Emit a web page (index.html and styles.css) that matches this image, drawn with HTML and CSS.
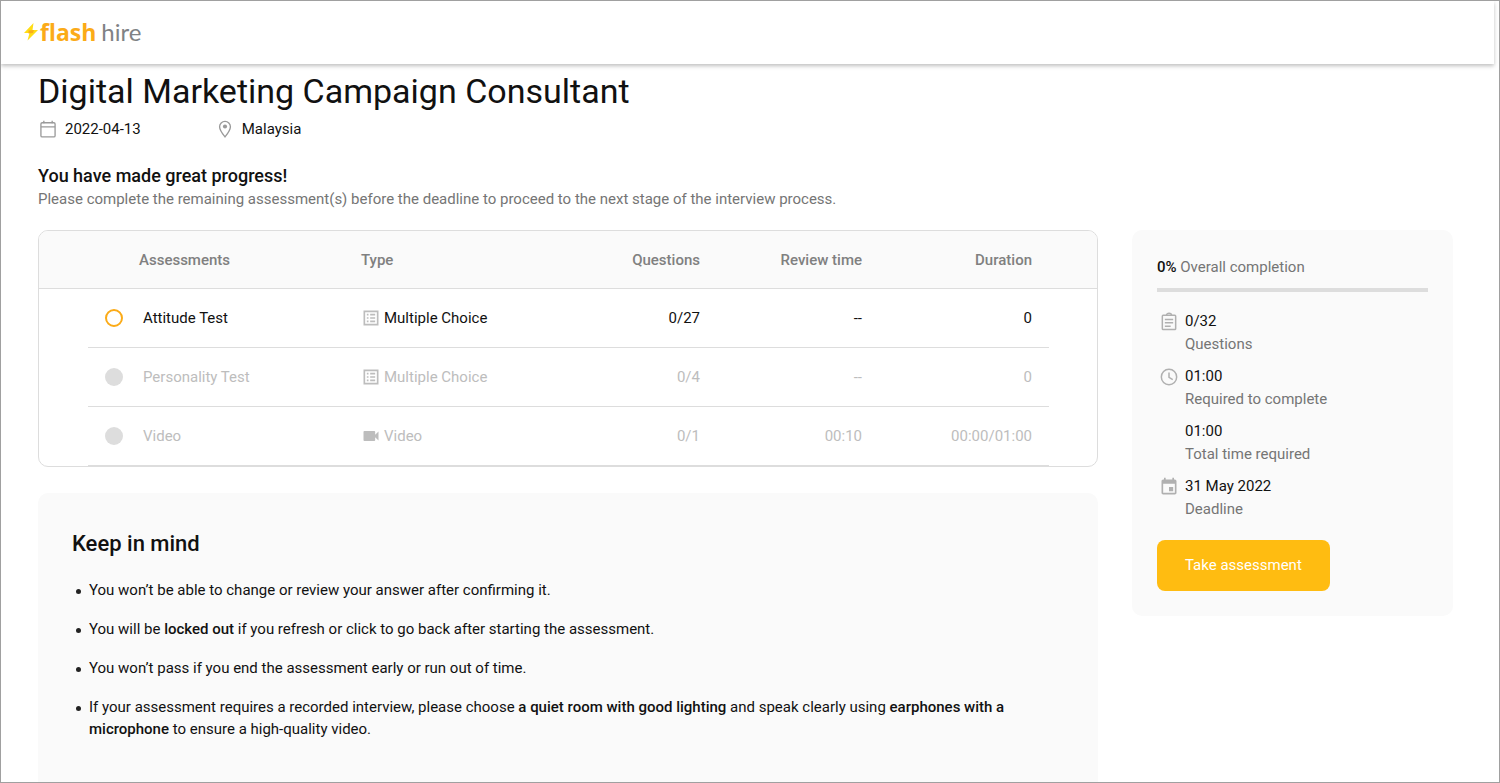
FILE: index.html
```html
<!DOCTYPE html>
<html lang="en">
  <head>
    <meta charset="UTF-8" />
    <meta name="viewport" content="width=device-width, initial-scale=1.0" />
    <title>Flash Hire - Assessments</title>
    <link rel="stylesheet" href="styles.css">
  </head>
  <body>
    <svg class="sprite" aria-hidden="true">
      <symbol id="icon-list" viewBox="0 0 24 24">
        <path d="M3 3h18v18H3zM5 5v14h14V5zM7 7h2v2H7zM7 11h2v2H7zM7 15h2v2H7zM11 7h6v2h-6zM11 11h6v2h-6zM11 15h6v2h-6z" fill-rule="evenodd" />
      </symbol>
      <symbol id="icon-video" viewBox="0 0 24 24">
        <path d="M17 10.5V7c0-.55-.45-1-1-1H4c-.55 0-1 .45-1 1v10c0 .55.45 1 1 1h12c.55 0 1-.45 1-1v-3.5l4 4v-11l-4 4z" />
      </symbol>
    </svg>

    <div class="page">
      <header class="header">
        <a href="#" class="logo">
          <svg class="logo-bolt" viewBox="0 0 14 20">
            <path d="M9.500 2 0 12h5.500L3.500 19.500 14 9H8.500z" fill="#ffdd15" />
            <path d="M4.500 9.500l5.500-.5-1 3-4.500.500z" fill="#fbae17" />
          </svg>
          <span class="logo-flash">flash</span>
          <span class="logo-hire">hire</span>
        </a>
      </header>

      <main class="main">
        <h1>Digital Marketing Campaign Consultant</h1>
        <div class="meta">
          <span class="meta-item">
            <svg class="icon" viewBox="0 0 24 24" fill="none" stroke="currentColor" stroke-width="1.6">
              <rect x="3.5" y="4.5" width="17" height="17" rx="1.5" />
              <path d="M3.5 9.5h17M7 2v3M17 2v3" />
            </svg>
            2022-04-13
          </span>
          <span class="meta-item">
            <svg class="icon" viewBox="0 0 24 24" fill="none" stroke="currentColor" stroke-width="1.6">
              <path d="M12 21.5C8.500 17.200 5.500 13 5.500 9.300a6.500 6.500 0 0 1 13 0c0 3.700-3 7.900-6.500 12.200z" />
              <circle cx="12" cy="9" r="2.500" fill="currentColor" stroke="none" />
            </svg>
            Malaysia
          </span>
        </div>

        <h2>You have made great progress!</h2>
        <p class="intro">Please complete the remaining assessment(s) before the deadline to proceed to the next stage of the interview process.</p>

        <div class="columns">
          <div class="left">
            <div class="table-card">
              <table>
                <thead>
                  <tr>
                    <th class="col-name">Assessments</th>
                    <th class="col-type">Type</th>
                    <th class="col-questions">Questions</th>
                    <th class="col-review">Review time</th>
                    <th class="col-duration">Duration</th>
                  </tr>
                </thead>
                <tbody>
                  <tr class="active">
                    <td><span class="name"><span class="dot"></span>Attitude Test</span></td>
                    <td><span class="type"><svg class="icon"><use href="#icon-list" /></svg>Multiple Choice</span></td>
                    <td class="num">0/27</td>
                    <td class="num">--</td>
                    <td class="num">0</td>
                  </tr>
                  <tr>
                    <td><span class="name"><span class="dot"></span>Personality Test</span></td>
                    <td><span class="type"><svg class="icon"><use href="#icon-list" /></svg>Multiple Choice</span></td>
                    <td class="num">0/4</td>
                    <td class="num">--</td>
                    <td class="num">0</td>
                  </tr>
                  <tr>
                    <td><span class="name"><span class="dot"></span>Video</span></td>
                    <td><span class="type"><svg class="icon"><use href="#icon-video" /></svg>Video</span></td>
                    <td class="num">0/1</td>
                    <td class="num">00:10</td>
                    <td class="num">00:00/01:00</td>
                  </tr>
                </tbody>
              </table>
            </div>

            <section class="tips">
              <h3>Keep in mind</h3>
              <ul>
                <li>You won’t be able to change or review your answer after confirming it.</li>
                <li>You will be <strong>locked out</strong> if you refresh or click to go back after starting the assessment.</li>
                <li>You won’t pass if you end the assessment early or run out of time.</li>
                <li>If your assessment requires a recorded interview, please choose <strong>a quiet room with good lighting</strong> and speak clearly using <strong>earphones with a microphone</strong> to ensure a high-quality video.</li>
              </ul>
            </section>
          </div>

          <aside class="summary">
            <label for="completion"><strong>0%</strong> Overall completion</label>
            <progress id="completion" value="0" max="100"></progress>
            <ul class="stats">
              <li>
                <svg class="icon" viewBox="0 0 24 24" fill="none" stroke="currentColor" stroke-width="1.8">
                  <rect x="4" y="4" width="16" height="17" rx="1" />
                  <path d="M7 9h10M7 13h10M7 17h7" />
                  <path d="M9 4a3 2.500 0 0 1 6 0" />
                </svg>
                <div>
                  <p class="value">0/32</p>
                  <p>Questions</p>
                </div>
              </li>
              <li>
                <svg class="icon" viewBox="0 0 24 24" fill="none" stroke="currentColor" stroke-width="1.8">
                  <circle cx="12" cy="12" r="9.200" />
                  <path d="M12 6.500V12.500l4.500 2.700" />
                </svg>
                <div>
                  <p class="value">01:00</p>
                  <p>Required to complete</p>
                </div>
              </li>
              <li>
                <span class="icon"></span>
                <div>
                  <p class="value">01:00</p>
                  <p>Total time required</p>
                </div>
              </li>
              <li>
                <svg class="icon" viewBox="0 0 24 24">
                  <path d="M17 12h-5v5h5v-5zM16 1v2H8V1H6v2H5c-1.110 0-1.990.9-1.990 2L3 19c0 1.100.89 2 2 2h14c1.100 0 2-.9 2-2V5c0-1.100-.9-2-2-2h-1V1h-2zm3 18H5V8h14v11z" />
                </svg>
                <div>
                  <p class="value">31 May 2022</p>
                  <p>Deadline</p>
                </div>
              </li>
            </ul>
            <button type="button">Take assessment</button>
          </aside>
        </div>
      </main>
    </div>
  </body>
</html>
```
FILE: styles.css
```css
* {
  margin: 0;
  padding: 0;
  box-sizing: border-box;
}

body {
  font-family: Roboto, "Liberation Sans", sans-serif;
  font-size: 15px;
  line-height: 22px;
  color: #111;
  background-color: #fff;
}

.sprite {
  display: none;
}

.page {
  height: 100vh;
  padding-right: 5px;
  border: 1px solid #a0a0a0;
  overflow-y: auto;
  scrollbar-width: none;
}

.header {
  display: flex;
  align-items: center;
  height: 63px;
  padding: 0 23px 2px;
  box-shadow: 0 2px 4px rgba(0, 0, 0, 0.25);
}

.logo {
  display: flex;
  align-items: baseline;
  font-size: 24px;
  text-decoration: none;
}

.logo-bolt {
  width: 14px;
  height: 20px;
  margin-right: 2px;
}

.logo-flash {
  color: #fbab18;
  font-family: "Open Sans", sans-serif;
  font-size: 23px;
  font-weight: 700;
}

.logo-hire {
  margin-left: 5px;
  color: #808285;
  font-family: Lato, sans-serif;
}

.main {
  padding: 7px 41px 0 37px;
}

h1 {
  font-size: 34px;
  font-weight: 400;
  line-height: 40px;
}

.meta {
  display: flex;
  gap: 74px;
  margin-top: 7px;
}

.meta-item {
  display: flex;
  align-items: center;
  gap: 7px;
}

.icon {
  flex-shrink: 0;
  width: 20px;
  height: 20px;
  color: #9a9a9a;
  fill: currentColor;
}

.icon[fill="none"] {
  fill: none;
}

h2 {
  margin-top: 24px;
  font-size: 18px;
  font-weight: 500;
  line-height: 24px;
}

.intro {
  color: #757575;
}

.columns {
  display: grid;
  grid-template-columns: minmax(0, 1fr) 321px;
  align-items: start;
  gap: 34px;
  margin-top: 20px;
}

.table-card {
  border: 1px solid #ddd;
  border-radius: 10px;
  overflow: hidden;
}

table {
  width: 100%;
  table-layout: fixed;
  border-collapse: separate;
  border-spacing: 0;
}

/* empty cells that keep the row lines away from the card edge */
tr::before,
tr::after {
  content: "";
  display: table-cell;
  width: 49px;
}

tr::after {
  width: 48px;
}

thead {
  background-color: #fafafa;
}

thead tr::before,
thead tr::after {
  border-bottom: 1px solid #ddd;
}

th,
td {
  height: 59px;
  padding: 0 17px;
  border-bottom: 1px solid #ddd;
  text-align: left;
  vertical-align: middle;
}

th {
  height: 58px;
  color: #808080;
  font-weight: 500;
}

td {
  color: #bdbdbd;
}

.active td {
  color: #111;
}

.col-name {
  width: 256px;
  padding-left: 51px;
}

.col-questions,
.col-review {
  width: 162px;
}

.col-duration {
  width: 170px;
}

.col-questions,
.col-review,
.col-duration,
.num {
  text-align: right;
}

.name,
.type {
  display: flex;
  align-items: center;
}

.name {
  gap: 20px;
}

.type {
  gap: 3px;
}

.type .icon {
  color: #bdbdbd;
}

.dot {
  width: 18px;
  height: 18px;
  border-radius: 50%;
  background-color: #ddd;
}

.active .dot {
  border: 2px solid #fbab18;
  background-color: #fff;
}

.tips {
  margin-top: 26px;
  padding: 36px 34px 48px;
  border-radius: 10px;
  background-color: #fafafa;
}

h3 {
  font-size: 22px;
  font-weight: 500;
  line-height: 30px;
}

.tips ul {
  margin-top: 20px;
  padding-left: 17px;
  list-style: none;
}

.tips li {
  margin-bottom: 17px;
}

.tips li::before {
  content: "";
  display: inline-block;
  width: 5px;
  height: 5px;
  margin: 0 8px 0 -13px;
  border-radius: 50%;
  background-color: #222;
  vertical-align: middle;
}

strong {
  color: #111;
  font-weight: 500;
}

.summary {
  padding: 26px 25px 25px;
  border-radius: 10px;
  background-color: #fafafa;
  color: #757575;
}

progress {
  display: block;
  width: 100%;
  height: 4px;
  margin-top: 10px;
  border: none;
  appearance: none;
  background-color: #ddd;
}

progress::-webkit-progress-bar {
  background-color: #ddd;
}

progress::-webkit-progress-value {
  background-color: #ffbc11;
}

.stats {
  margin-top: 18px;
  list-style: none;
  line-height: 23px;
}

.stats li {
  display: flex;
  gap: 6px;
  margin-bottom: 9px;
  padding-left: 2px;
}

.stats .icon {
  margin-top: 2px;
  color: #b0b0b0;
}

.value {
  color: #111;
}

button {
  display: block;
  margin-top: 19px;
  padding: 14px 28px;
  border: none;
  border-radius: 8px;
  background-color: #ffbc11;
  color: white;
  font-family: inherit;
  font-size: 15px;
  line-height: 23px;
  cursor: pointer;
}
```
